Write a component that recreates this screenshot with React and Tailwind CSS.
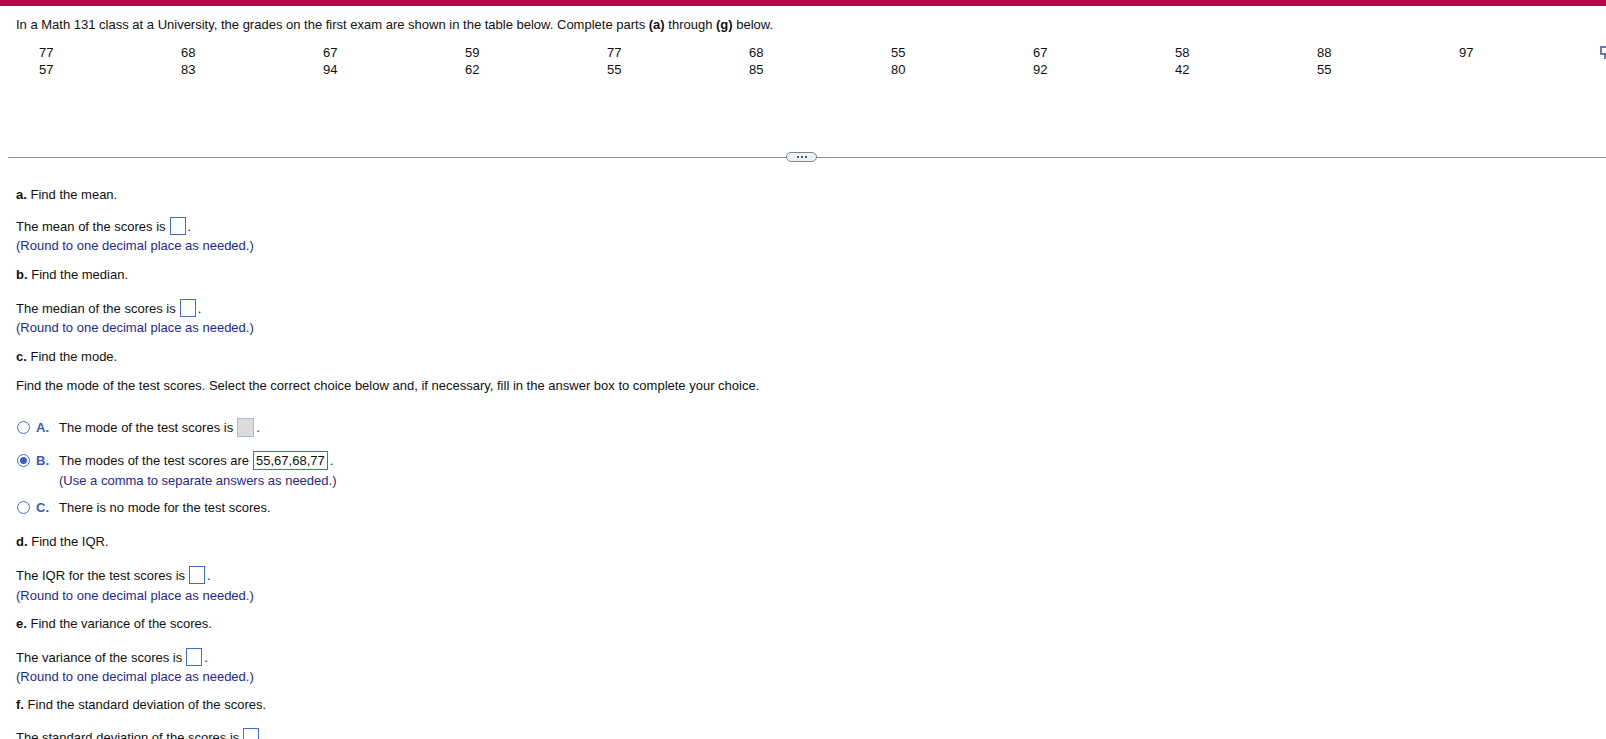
const scores = [
  [77, 68, 67, 59, 77, 68, 55, 67, 58, 88, 97],
  [57, 83, 94, 62, 55, 85, 80, 92, 42, 55, null],
];

const AnswerBox = () => (
  <span className="inline-block w-[16px] h-[18px] border border-[#3d6fcc] bg-white ml-[4px] mr-[2px]" />
);

const Hint = ({ children }) => (
  <div className="leading-[17px] text-[#27288a]">{children}</div>
);

const Part = ({ letter, title }) => (
  <div className="leading-[17px]">
    <span className="font-bold">{letter}.</span> {title}
  </div>
);

const Radio = ({ checked }) => (
  <span className="w-[13px] h-[13px] rounded-full border border-[#4a6fb5] flex items-center justify-center bg-white">
    {checked && <span className="w-[7px] h-[7px] rounded-full bg-[#3a5fc0]" />}
  </span>
);

const Choice = ({ letter, checked, children, className = "" }) => (
  <div className={"flex items-start " + className}>
    <div className="flex items-center h-[17px] pl-[17px] w-[59px]">
      <Radio checked={checked} />
      <span className="ml-[6px] text-[#3a5bbf] font-bold">{letter}.</span>
    </div>
    <div>{children}</div>
  </div>
);

export default function App() {
  return (
    <div className="w-[1606px] h-[739px] overflow-hidden bg-white text-[13px] text-[#111] font-['Liberation_Sans',Arial,sans-serif]">
      <div className="h-[6px] bg-[#b00c4c]" />
      <div className="pl-4 pt-[10px] leading-[17px] relative">
        In a Math 131 class at a University, the grades on the first exam are shown in the table below. Complete parts{" "}
        <span className="font-bold">(a)</span> through <span className="font-bold">(g)</span> below.
      </div>

      <div className="relative">
        <div className="pl-[39px] mt-[11px] grid grid-cols-[repeat(11,142px)] leading-[17px]">
          {scores.map((row, r) =>
            row.map((v, c) => <div key={r + "-" + c}>{v ?? ""}</div>)
          )}
        </div>
        <svg
          className="absolute right-[-6px] top-[2px]"
          width="12"
          height="14"
          viewBox="0 0 12 14"
          fill="none"
          stroke="#4a5aa8"
          strokeWidth="1.6"
        >
          <rect x="1" y="1" width="9" height="7" />
          <path d="M5 8v5" />
        </svg>
      </div>

      <div className="mt-[74px] ml-2 flex items-center h-[10px]">
        <div className="w-[778px] h-px bg-[#8a9096]" />
        <div className="w-[31px] h-[10px] rounded-full border border-[#7d8590] bg-[#eef0f3] flex items-center justify-center gap-[2px]">
          <span className="w-[2px] h-[2px] bg-[#555c66]" />
          <span className="w-[2px] h-[2px] bg-[#555c66]" />
          <span className="w-[2px] h-[2px] bg-[#555c66]" />
        </div>
        <div className="flex-1 h-px bg-[#8a9096]" />
      </div>

      <div className="pl-4 mt-[24px]">
        <Part letter="a" title="Find the mean." />
        <div className="mt-[14px] leading-[17px] flex items-center">
          <span>The mean of the scores is</span>
          <AnswerBox />.
        </div>
        <div className="mt-[2px]">
          <Hint>(Round to one decimal place as needed.)</Hint>
        </div>

        <div className="mt-[12px]">
          <Part letter="b" title="Find the median." />
        </div>
        <div className="mt-[16px] leading-[17px] flex items-center">
          <span>The median of the scores is</span>
          <AnswerBox />.
        </div>
        <div className="mt-[2px]">
          <Hint>(Round to one decimal place as needed.)</Hint>
        </div>

        <div className="mt-[12px]">
          <Part letter="c" title="Find the mode." />
        </div>
        <div className="mt-[12px] leading-[17px]">
          Find the mode of the test scores. Select the correct choice below and, if necessary, fill in the answer box to complete your choice.
        </div>
      </div>

      <div className="mt-[25px] leading-[17px]">
        <Choice letter="A">
          <div className="flex items-center h-[17px]">
            <span>The mode of the test scores is</span>
            <span className="inline-block w-[17px] h-[19px] border border-[#a6bde3] bg-[#dcdcdc] ml-[4px] mr-[2px]" />.
          </div>
        </Choice>
        <Choice letter="B" checked className="mt-[16px]">
          <div className="flex items-center h-[17px]">
            <span>The modes of the test scores are</span>
            <span className="inline-flex items-center h-[19px] px-[2px] border border-[#3d6fcc] bg-white ml-[4px] mr-[2px]">
              55,67,68,77
            </span>
            .
          </div>
          <div className="mt-[3px]">
            <Hint>(Use a comma to separate answers as needed.)</Hint>
          </div>
        </Choice>
        <Choice letter="C" className="mt-[10px]">
          There is no mode for the test scores.
        </Choice>
      </div>

      <div className="pl-4 mt-[17px]">
        <Part letter="d" title="Find the IQR." />
        <div className="mt-[16px] leading-[17px] flex items-center">
          <span>The IQR for the test scores is</span>
          <AnswerBox />.
        </div>
        <div className="mt-[3px]">
          <Hint>(Round to one decimal place as needed.)</Hint>
        </div>

        <div className="mt-[11px]">
          <Part letter="e" title="Find the variance of the scores." />
        </div>
        <div className="mt-[16px] leading-[17px] flex items-center">
          <span>The variance of the scores is</span>
          <AnswerBox />.
        </div>
        <div className="mt-[2px]">
          <Hint>(Round to one decimal place as needed.)</Hint>
        </div>

        <div className="mt-[11px]">
          <Part letter="f" title="Find the standard deviation of the scores." />
        </div>
        <div className="mt-[15px] leading-[17px] flex items-center">
          <span>The standard deviation of the scores is</span>
          <AnswerBox />.
        </div>
      </div>
    </div>
  );
}
